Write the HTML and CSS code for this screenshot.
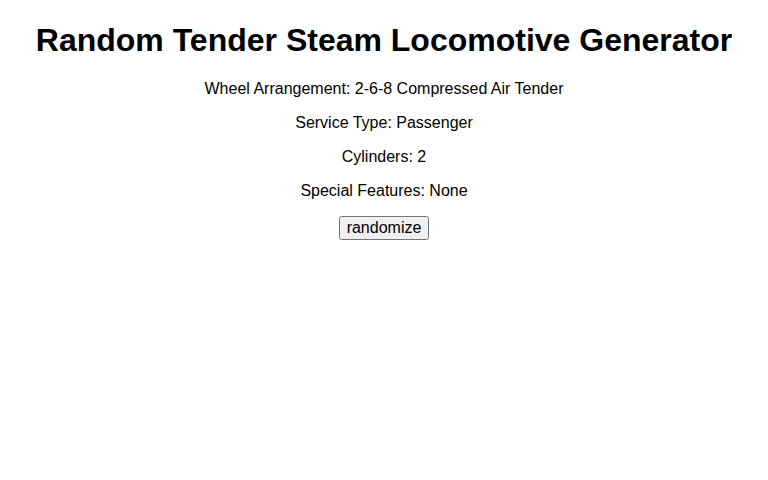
FILE: index.html
```html
<!DOCTYPE html>
<html lang="en">
<head>
  <meta charset="UTF-8">
  <meta name="viewport" content="width=device-width, initial-scale=1.0">
  <title>Random Tender Steam Locomotive Generator</title>
  <link rel="stylesheet" href="styles.css">
</head>
<body>
  <div id="generator">
    <h1>Random Tender Steam Locomotive Generator</h1>
    <p>Wheel Arrangement: <span id="wheels">2-6-8 Compressed Air Tender</span></p>
    <p>Service Type: <span id="service">Passenger</span></p>
    <p>Cylinders: <span id="cylinders">2</span></p>
    <p>Special Features: <span id="features">None</span></p>
    <button id="randomize-btn">randomize</button>
  </div>
</body>
</html>
```

FILE: styles.css
```css
body {
  font-family: "Liberation Sans", Arial, sans-serif;
  margin: 8px;
  background-color: #fff;
  color: #000;
}

#generator {
  text-align: center;
}

h1 {
  font-size: 32px;
  margin: 14px 0 21px;
}

p {
  font-size: 16px;
  margin: 16px 0;
}

button {
  font-family: "Liberation Sans", Arial, sans-serif;
  font-size: 16px;
  padding: 1px 6px;
}
```
